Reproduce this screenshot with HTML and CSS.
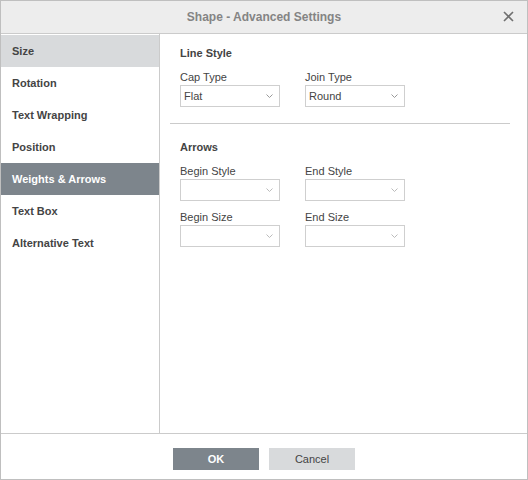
FILE: index.html
```html
<!DOCTYPE html>
<html lang="en">
<head>
    <meta charset="UTF-8">
    <title>Shape - Advanced Settings</title>
    <link rel="stylesheet" href="styles.css">
</head>
<body>
    <div class="dialog">
        <div class="header">
            <span class="title">Shape - Advanced Settings</span>
            <span class="close">
                <svg width="11" height="11" viewBox="0 0 11 11"><path d="M1 1L10 10M10 1L1 10" stroke="#707070" stroke-width="1.6"/></svg>
            </span>
        </div>
        <div class="body">
            <div class="sidebar">
                <div class="tab hover">Size</div>
                <div class="tab">Rotation</div>
                <div class="tab">Text Wrapping</div>
                <div class="tab">Position</div>
                <div class="tab active">Weights &amp; Arrows</div>
                <div class="tab">Text Box</div>
                <div class="tab">Alternative Text</div>
            </div>
            <div class="content">
                <div class="heading">Line Style</div>
                <div class="row">
                    <div class="field">
                        <div class="label">Cap Type</div>
                        <div class="select">Flat<svg class="caret" width="7" height="4" viewBox="0 0 7 4"><path d="M0.5 0.5L3.5 3.5L6.5 0.5" fill="none" stroke="#999"/></svg></div>
                    </div>
                    <div class="field">
                        <div class="label">Join Type</div>
                        <div class="select">Round<svg class="caret" width="7" height="4" viewBox="0 0 7 4"><path d="M0.5 0.5L3.5 3.5L6.5 0.5" fill="none" stroke="#999"/></svg></div>
                    </div>
                </div>
                <div class="divider"></div>
                <div class="heading">Arrows</div>
                <div class="row">
                    <div class="field">
                        <div class="label">Begin Style</div>
                        <div class="select"><svg class="caret" width="7" height="4" viewBox="0 0 7 4"><path d="M0.5 0.5L3.5 3.5L6.5 0.5" fill="none" stroke="#bbb"/></svg></div>
                    </div>
                    <div class="field">
                        <div class="label">End Style</div>
                        <div class="select"><svg class="caret" width="7" height="4" viewBox="0 0 7 4"><path d="M0.5 0.5L3.5 3.5L6.5 0.5" fill="none" stroke="#bbb"/></svg></div>
                    </div>
                </div>
                <div class="row">
                    <div class="field">
                        <div class="label">Begin Size</div>
                        <div class="select"><svg class="caret" width="7" height="4" viewBox="0 0 7 4"><path d="M0.5 0.5L3.5 3.5L6.5 0.5" fill="none" stroke="#bbb"/></svg></div>
                    </div>
                    <div class="field">
                        <div class="label">End Size</div>
                        <div class="select"><svg class="caret" width="7" height="4" viewBox="0 0 7 4"><path d="M0.5 0.5L3.5 3.5L6.5 0.5" fill="none" stroke="#bbb"/></svg></div>
                    </div>
                </div>
            </div>
        </div>
        <div class="footer">
            <div class="btn primary">OK</div>
            <div class="btn">Cancel</div>
        </div>
    </div>
</body>
</html>
```

FILE: styles.css
```css
body {
    margin: 0;
    font-family: 'Liberation Sans', Arial, sans-serif;
    font-size: 11px;
    color: #444;
}

.dialog {
    width: 528px;
    height: 480px;
    box-sizing: border-box;
    border: 1px solid #bfbfbf;
    background: #fff;
    display: flex;
    flex-direction: column;
}

.header {
    height: 32px;
    flex: none;
    background: #ededed;
    border-bottom: 1px solid #cbcbcb;
    display: flex;
    align-items: center;
    justify-content: center;
    position: relative;
}

.title {
    font-size: 12px;
    font-weight: bold;
    color: #848484;
}

.close {
    position: absolute;
    right: 13px;
    top: 10px;
    line-height: 0;
}

.body {
    flex: 1;
    display: flex;
}

.sidebar {
    width: 158px;
    flex: none;
    border-right: 1px solid #cbcbcb;
    padding-top: 1px;
}

.tab {
    height: 32px;
    line-height: 32px;
    padding-left: 11px;
    font-weight: bold;
    color: #444;
}

.tab.hover {
    background: #d8dadc;
}

.tab.active {
    background: #7d858c;
    color: #fff;
}

.content {
    flex: 1;
    padding: 12px 0 0 20px;
}

.heading {
    font-weight: bold;
    line-height: 14px;
    margin-bottom: 10px;
}

.row {
    display: flex;
    gap: 25px;
    margin-bottom: 9px;
}

.field {
    width: 100px;
}

.label {
    line-height: 14px;
    margin-bottom: 1px;
}

.select {
    height: 22px;
    box-sizing: border-box;
    border: 1px solid #cfcfcf;
    padding-left: 3px;
    line-height: 20px;
    display: flex;
    align-items: center;
    padding-right: 6px;
}

.select .caret {
    margin-left: auto;
}

.divider {
    margin: 16px 0 16px -10px;
    width: 340px;
    height: 1px;
    background: #cbcbcb;
}

.footer {
    height: 46px;
    flex: none;
    border-top: 1px solid #cbcbcb;
    display: flex;
    justify-content: center;
    gap: 10px;
    padding-top: 14px;
    box-sizing: border-box;
}

.btn {
    width: 86px;
    height: 22px;
    line-height: 22px;
    text-align: center;
    font-size: 11px;
    background: #d8dadc;
    color: #444;
}

.btn.primary {
    background: #7d858c;
    color: #fff;
    font-weight: bold;
}
```
